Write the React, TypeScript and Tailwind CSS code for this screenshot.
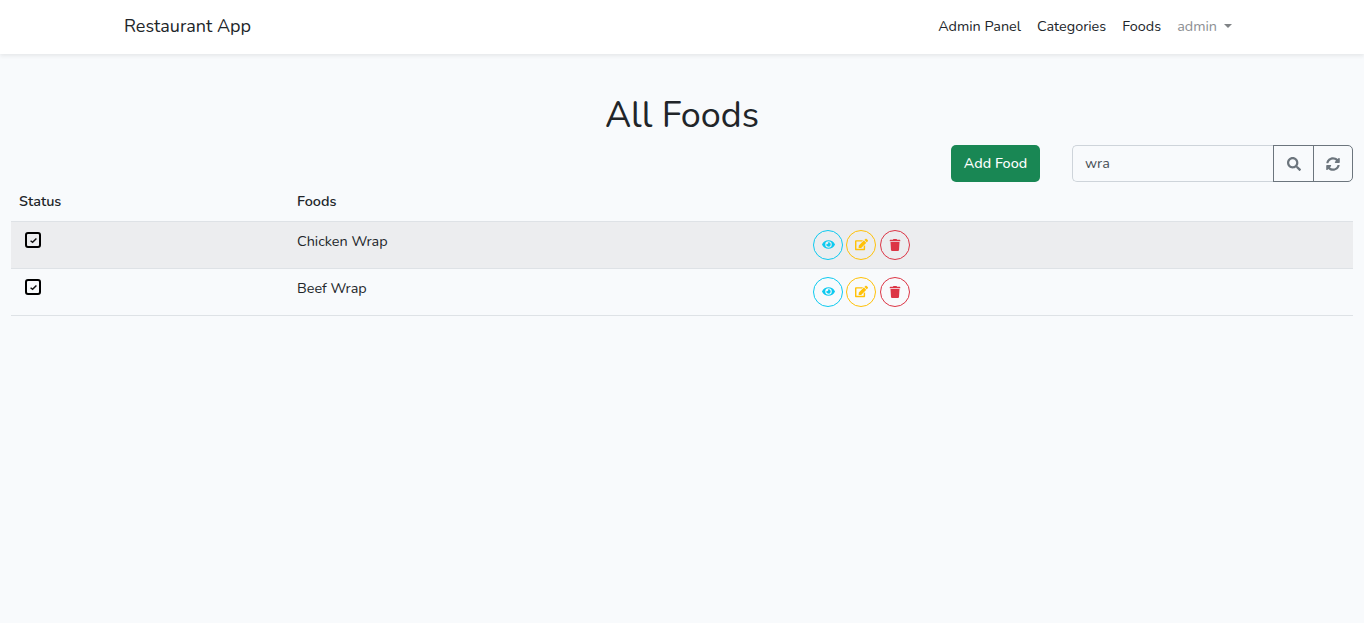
import { FaEye, FaEdit, FaTrash, FaSearch, FaSyncAlt } from "react-icons/fa";

const foods = [
  { name: "Chicken Wrap", striped: true },
  { name: "Beef Wrap", striped: false },
];

function Check() {
  return (
    <div className="flex h-4 w-4 items-center justify-center rounded-[3px] border-2 border-black">
      <svg viewBox="0 0 12 12" className="h-[11px] w-[11px]">
        <path d="M2.8 6.3 5 8 9.2 3.8" fill="none" stroke="#111" strokeWidth="1.6" />
      </svg>
    </div>
  );
}

export default function App() {
  return (
    <div className="min-h-[623px] bg-[#f8fafc] font-['Nunito','Noto_Sans',sans-serif] text-[14.4px] text-[#212529]">
      {/* NAVBAR */}
      <nav className="flex h-[54px] items-center bg-white pb-[1px] pl-[124px] pr-[132px] shadow-[0_2px_4px_rgba(0,0,0,0.075)]">
        <span className="text-[18px]">Restaurant App</span>
        <ul className="ml-auto flex items-center gap-4">
          <li>Admin Panel</li>
          <li>Categories</li>
          <li>Foods</li>
          <li className="flex items-center gap-[7px] text-[#8c8f93]">
            admin
            <span className="mb-[1px] h-0 w-0 border-x-[4px] border-t-[4px] border-x-transparent border-t-[#808386]" />
          </li>
        </ul>
      </nav>

      <h1 className="mb-[5px] mt-[38px] text-center text-[36px] leading-[48px]">All Foods</h1>

      {/* TOOLBAR */}
      <div className="flex items-stretch justify-end pr-[11px]">
        <button className="mr-8 h-[37px] w-[89px] rounded-[5px] bg-[#198754] font-medium text-white">Add Food</button>
        <div className="flex h-[37px]">
          <div className="flex w-[201px] items-center rounded-l-[5px] border border-r-0 border-[#ced4da] pl-[12px] text-[#495057]">wra</div>
          <button className="flex w-[41px] items-center justify-center border border-[#6c757d] text-[#6c757d]">
            <FaSearch size={14} />
          </button>
          <button className="-ml-px flex w-[40px] items-center justify-center rounded-r-[5px] border border-[#6c757d] text-[#6c757d]">
            <FaSyncAlt size={14} />
          </button>
        </div>
      </div>

      {/* TABLE */}
      <div className="px-[11px]">
        <div className="grid grid-cols-[278px_516px_1fr] border-b border-[#dee2e6]">
          <div className="px-2 py-[10px] font-semibold leading-[19px]">Status</div>
          <div className="px-2 py-[10px] font-semibold leading-[19px]">Foods</div>
          <div />
        </div>
        {foods.map((food) => (
          <div
            key={food.name}
            className={`grid h-[47px] grid-cols-[278px_516px_1fr] border-b border-[#dee2e6] ${food.striped ? "bg-[#ecedef]" : ""}`}
          >
            <div className="pl-[14px] pt-[10px]">
              <Check />
            </div>
            <div className="px-2 pt-[10px] leading-[19px]">{food.name}</div>
            <div className="flex gap-[3.4px] px-2 pt-[8px]">
              <span className="flex h-[30px] w-[30px] items-center justify-center rounded-full border border-[#0dcaf0] pb-[1px] text-[#0dcaf0]">
                <FaEye size={13} />
              </span>
              <span className="flex h-[30px] w-[30px] items-center justify-center rounded-full border border-[#ffc107] pb-[1px] text-[#ffc107]">
                <FaEdit size={13} />
              </span>
              <span className="flex h-[30px] w-[30px] items-center justify-center rounded-full border border-[#dc3545] pb-[1px] text-[#dc3545]">
                <FaTrash size={12} />
              </span>
            </div>
          </div>
        ))}
      </div>
    </div>
  );
}
